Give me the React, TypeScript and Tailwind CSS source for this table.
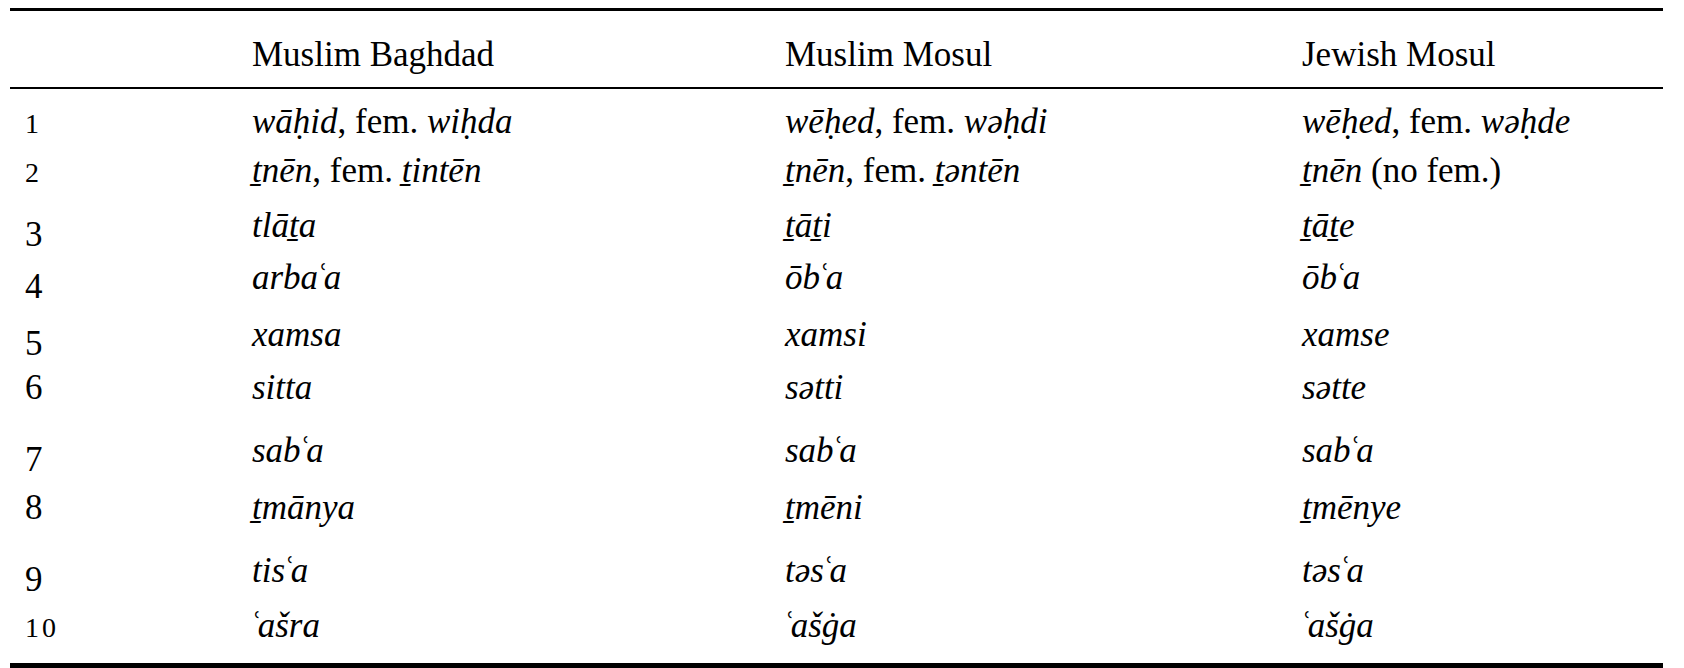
type Part = { t: string; i?: boolean };

interface Row {
  n: string;
  h: string;
  cells: Part[][];
}

const rows: Row[] = [
  {
    n: "1",
    h: "h-[49px]",
    cells: [
      [{ t: "wāḥid", i: true }, { t: ", fem. " }, { t: "wiḥda", i: true }],
      [{ t: "wēḥed", i: true }, { t: ", fem. " }, { t: "wəḥdi", i: true }],
      [{ t: "wēḥed", i: true }, { t: ", fem. " }, { t: "wəḥde", i: true }],
    ],
  },
  {
    n: "2",
    h: "h-[55px]",
    cells: [
      [{ t: "ṯnēn", i: true }, { t: ", fem. " }, { t: "ṯintēn", i: true }],
      [{ t: "ṯnēn", i: true }, { t: ", fem. " }, { t: "ṯəntēn", i: true }],
      [{ t: "ṯnēn", i: true }, { t: " (no fem.)" }],
    ],
  },
  {
    n: "3",
    h: "h-[52px]",
    cells: [[{ t: "tlāṯa", i: true }], [{ t: "ṯāṯi", i: true }], [{ t: "ṯāṯe", i: true }]],
  },
  {
    n: "4",
    h: "h-[57px]",
    cells: [[{ t: "arbaʿa", i: true }], [{ t: "ōbʿa", i: true }], [{ t: "ōbʿa", i: true }]],
  },
  {
    n: "5",
    h: "h-[53px]",
    cells: [[{ t: "xamsa", i: true }], [{ t: "xamsi", i: true }], [{ t: "xamse", i: true }]],
  },
  {
    n: "6",
    h: "h-[63px]",
    cells: [[{ t: "sitta", i: true }], [{ t: "sətti", i: true }], [{ t: "sətte", i: true }]],
  },
  {
    n: "7",
    h: "h-[57px]",
    cells: [[{ t: "sabʿa", i: true }], [{ t: "sabʿa", i: true }], [{ t: "sabʿa", i: true }]],
  },
  {
    n: "8",
    h: "h-[63px]",
    cells: [[{ t: "ṯmānya", i: true }], [{ t: "ṯmēni", i: true }], [{ t: "ṯmēnye", i: true }]],
  },
  {
    n: "9",
    h: "h-[55px]",
    cells: [[{ t: "tisʿa", i: true }], [{ t: "təsʿa", i: true }], [{ t: "təsʿa", i: true }]],
  },
  {
    n: "10",
    h: "h-[57px]",
    cells: [[{ t: "ʿašra", i: true }], [{ t: "ʿašġa", i: true }], [{ t: "ʿašġa", i: true }]],
  },
];

const grid = "grid grid-cols-[242px_533px_517px_1fr]";

// old-style figures faked: short ones shrink, descenders drop below the baseline
function OldStyle({ n }: { n: string }) {
  return (
    <>
      {n.split("").map((d, k) => {
        if (d === "1" || d === "2" || d === "0")
          return (
            <span key={k} className="text-[28px] tracking-[3px]">
              {d}
            </span>
          );
        if ("34579".includes(d))
          return (
            <span key={k} className="inline-block translate-y-[9px]">
              {d}
            </span>
          );
        return <span key={k}>{d}</span>;
      })}
    </>
  );
}

// the ayin half-ring has a wide advance in this font, pull it in
function Word({ t }: { t: string }) {
  const bits = t.split("ʿ");
  return (
    <>
      {bits.map((b, k) => (
        <span key={k}>
          {k > 0 && <span className="-mx-[3px]">ʿ</span>}
          {b}
        </span>
      ))}
    </>
  );
}

function Cell({ parts }: { parts: Part[] }) {
  return (
    <div className="whitespace-pre">
      {parts.map((p, k) =>
        p.i ? (
          <em key={k} className="italic">
            <Word t={p.t} />
          </em>
        ) : (
          <span key={k}>{p.t}</span>
        )
      )}
    </div>
  );
}

export default function App() {
  return (
    <div className="min-h-screen bg-white pt-[8px] font-['Liberation_Serif','DejaVu_Serif',serif] text-[35px] leading-[40px] text-black">
      <div className="ml-[10px] w-[1653px]">
        <div className="h-[3px] bg-black" />

        {/* header */}
        <div className={`${grid} h-[76px] pt-[24px]`}>
          <div />
          <div>Muslim Baghdad</div>
          <div>Muslim Mosul</div>
          <div>Jewish Mosul</div>
        </div>
        <div className="h-[2px] bg-black" />

        {/* numerals */}
        <div className="pt-[13px]">
          {rows.map((r) => (
            <div key={r.n} className={`${grid} ${r.h}`}>
              <div className="pl-[15px]">
                <OldStyle n={r.n} />
              </div>
              {r.cells.map((c, k) => (
                <Cell key={k} parts={c} />
              ))}
            </div>
          ))}
        </div>
        <div className="h-[5px] bg-black" />
      </div>
    </div>
  );
}
